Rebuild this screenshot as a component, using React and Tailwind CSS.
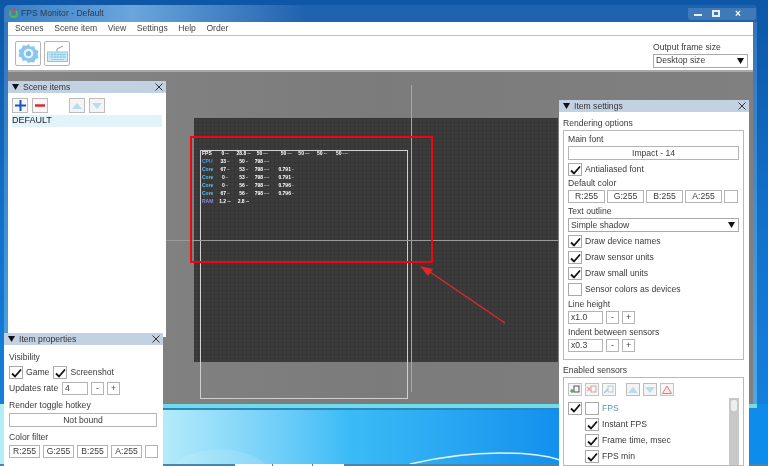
import React from 'react';

const font = { fontFamily: '"Liberation Sans", Arial, sans-serif' };

const Check = ({ checked = true, className = '' }) => (
  <span className={`flex h-[13px] w-[14px] shrink-0 items-center justify-center border border-[#a9a9a9] bg-white ${className}`}>
    {checked && (
      <svg width="11" height="10" viewBox="0 0 11 10">
        <path d="M1 5.5 L4 8.5 L10 1.5" fill="none" stroke="#111" strokeWidth="1.8" />
      </svg>
    )}
  </span>
);

const CheckRow = ({ label, checked = true, className = '' }) => (
  <div className={`flex h-[13px] items-center gap-[3px] ${className}`}>
    <Check checked={checked} />
    <span>{label}</span>
  </div>
);

const Btn = ({ children, className = '' }) => (
  <div className={`flex h-[13px] items-center justify-center border border-[#b4b4b4] bg-white ${className}`}>{children}</div>
);

const Label = ({ children, className = '' }) => (
  <div className={`flex h-[14px] items-center ${className}`}>{children}</div>
);

const Arrow = () => (
  <svg width="7" height="6" viewBox="0 0 7 6" className="shrink-0">
    <path d="M0 0 H7 L3.5 6 Z" fill="#111" />
  </svg>
);

const Select = ({ value, className = '' }) => (
  <div className={`flex h-[14px] items-center justify-between border border-[#a9a9a9] bg-white pl-[2px] pr-[3px] ${className}`}>
    <span>{value}</span>
    <Arrow />
  </div>
);

const Close = () => (
  <svg width="8" height="8" viewBox="0 0 8 8">
    <path d="M0.5 0.5 L7.5 7.5 M7.500 0.5 L0.5 7.5" stroke="#333" strokeWidth="1" />
  </svg>
);

const PanelHeader = ({ title }) => (
  <div className="flex h-[12px] items-center justify-between bg-[#c3d2e3] pl-[4px] pr-[3px]">
    <div className="flex items-center gap-[4px]">
      <Arrow />
      <span className="text-[#333]">{title}</span>
    </div>
    <Close />
  </div>
);

const ColorRow = ({ widths, swatch, gap = 'gap-[3px]' }) => (
  <div className={`flex ${gap}`}>
    {['R:255', 'G:255', 'B:255', 'A:255'].map((c) => (
      <Btn key={c} className={widths}>{c}</Btn>
    ))}
    <Btn className={swatch} />
  </div>
);

const Stepper = ({ value, inputClass }) => (
  <div className="flex gap-[3px]">
    <Btn className={`justify-start pl-[2px] ${inputClass}`}>{value}</Btn>
    <Btn className="w-[13px]">-</Btn>
    <Btn className="w-[13px]">+</Btn>
  </div>
);

const ToolIcon = ({ children, className = '' }) => (
  <div className={`flex h-[13px] w-[14px] items-center justify-center border border-[#c4c4c4] bg-[#f6f6f6] ${className}`}>
    {children}
  </div>
);

const Tri = ({ up, color = '#b9dbee', size = 'w-[15px] h-[15px]' }) => (
  <div className={`flex items-center justify-center border border-[#bcbcbc] bg-[#f4f4f4] ${size}`}>
    <svg width="10" height="6" viewBox="0 0 10 6">
      <path d={up ? 'M0 6 L5 0 L10 6 Z' : 'M0 0 H10 L5 6 Z'} fill={color} />
    </svg>
  </div>
);

// column widths for the overlay text, after the 14px name column
const statCols = ['w-[18px]', 'w-[19px]', 'w-[18px]', 'w-[30px]', 'w-[6px]', 'w-[30px]', 'w-[10px]'];

const statRows = [
  { name: 'FPS', color: 'text-white', cells: ['0', '28.8', '50', '50', '50', '50', '50'], units: ['fps', 'ms', 'min', 'avg', 'max', '1%', '0.1%'] },
  { name: 'CPU', color: 'text-[#4f9be8]', cells: ['33', '50', '798'], units: ['%', 'C', 'MHz'] },
  { name: 'Core', color: 'text-[#5cc0f0]', cells: ['67', '53', '798', '0.791'], units: ['%', 'C', 'MHz', 'V'] },
  { name: 'Core', color: 'text-[#5cc0f0]', cells: ['0', '53', '798', '0.791'], units: ['%', 'C', 'MHz', 'V'] },
  { name: 'Core', color: 'text-[#5cc0f0]', cells: ['0', '56', '798', '0.796'], units: ['%', 'C', 'MHz', 'V'] },
  { name: 'Core', color: 'text-[#5cc0f0]', cells: ['67', '56', '798', '0.796'], units: ['%', 'C', 'MHz', 'V'] },
  { name: 'RAM', color: 'text-[#8f87dc]', cells: ['1.2', '2.8'], units: ['GB', 'GB'] },
];

const SceneItems = () => (
  <div className="absolute left-[8px] top-[81px] h-[256px] w-[158px] bg-white">
    <PanelHeader title="Scene items" />
    <div className="flex items-center px-[4px] pt-[5px]">
      <div className="flex h-[15px] w-[16px] items-center justify-center border border-[#bcbcbc] bg-[#f6f6f6]">
        <svg width="11" height="11" viewBox="0 0 11 11"><path d="M5.5 0 V11 M0 5.5 H11" stroke="#1558c0" strokeWidth="2" /></svg>
      </div>
      <div className="ml-[4px] flex h-[15px] w-[16px] items-center justify-center border border-[#bcbcbc] bg-[#f6f6f6]">
        <svg width="10" height="3" viewBox="0 0 10 3"><path d="M0 1.5 H10" stroke="#e0202c" strokeWidth="2.4" /></svg>
      </div>
      <Tri up size="ml-[21px] w-[16px] h-[15px]" />
      <Tri size="ml-[4px] w-[16px] h-[15px]" />
    </div>
    <div className="mx-[4px] mt-[2px] flex h-[12px] items-center bg-[#e3f3fc] text-[9px] text-[#222]">DEFAULT</div>
  </div>
);

const ItemProperties = () => (
  <div className="absolute left-[4px] top-[333px] h-[133px] w-[159px] bg-white">
    <PanelHeader title="Item properties" />
    <div className="px-[5px] pt-[5px]">
      <Label>Visibility</Label>
      <div className="mt-[2px] flex">
        <CheckRow label="Game" />
        <CheckRow label="Screenshot" className="ml-[4px]" />
      </div>
      <div className="mt-[3px] flex items-center whitespace-nowrap">
        <span className="w-[53px]">Updates rate</span>
        <Stepper value="4" inputClass="w-[26px]" />
      </div>
      <Label className="mt-[3px]">Render toggle hotkey</Label>
      <Btn className="mt-[1px] h-[14px] w-[148px]">Not bound</Btn>
      <Label className="mt-[3px]">Color filter</Label>
      <div className="mt-[1px]">
        <ColorRow widths="w-[31px]" swatch="w-[13px]" />
      </div>
    </div>
  </div>
);

const ItemSettings = () => (
  <div className="absolute left-[559px] top-[100px] h-[366px] w-[190px] bg-white">
    <PanelHeader title="Item settings" />
    <div className="px-[4px] pt-[4px]">
      <Label>Rendering options</Label>
      <div className="h-[230px] w-[181px] border border-[#b9b9b9] px-[4px] pt-[1px]">
        <Label>Main font</Label>
        <Btn className="h-[14px] w-[171px]">Impact - 14</Btn>
        <CheckRow label="Antialiased font" className="mt-[3px]" />
        <Label>Default color</Label>
        <ColorRow widths="w-[37px]" swatch="w-[14px]" gap="gap-[2px]" />
        <Label className="mt-[1px]">Text outline</Label>
        <Select value="Simple shadow" className="w-[171px]" />
        <CheckRow label="Draw device names" className="mt-[3px]" />
        <CheckRow label="Draw sensor units" className="mt-[3px]" />
        <CheckRow label="Draw small units" className="mt-[3px]" />
        <CheckRow label="Sensor colors as devices" checked={false} className="mt-[3px]" />
        <Label className="mt-[1px]">Line height</Label>
        <Stepper value="x1.0" inputClass="w-[35px]" />
        <Label className="mt-[1px]">Indent between sensors</Label>
        <Stepper value="x0.3" inputClass="w-[35px]" />
      </div>
      <Label className="h-[17px] pt-[3px]">Enabled sensors</Label>
      <div className="relative h-[89px] w-[181px] overflow-hidden border border-[#b9b9b9] px-[4px] pt-[5px]">
        <div className="flex items-center">
          <ToolIcon><svg width="10" height="9" viewBox="0 0 10 9"><rect x="4" y="1" width="5" height="6" fill="none" stroke="#555" /><path d="M0 6 H4 M2 4 V8" stroke="#25a23a" strokeWidth="1.2" /></svg></ToolIcon>
          <ToolIcon className="ml-[3px]"><svg width="10" height="9" viewBox="0 0 10 9"><rect x="4" y="1" width="5" height="6" fill="none" stroke="#c9a9a9" /><path d="M0 2 L4 6 M4 2 L0 6" stroke="#eba3a3" strokeWidth="1.2" /></svg></ToolIcon>
          <ToolIcon className="ml-[3px]"><svg width="10" height="9" viewBox="0 0 10 9"><rect x="4" y="1" width="5" height="6" fill="none" stroke="#b9c9d4" /><path d="M0 8 L4 4" stroke="#9cc6e0" strokeWidth="1.4" /></svg></ToolIcon>
          <Tri up size="ml-[10px] w-[14px] h-[13px]" />
          <Tri size="ml-[3px] w-[14px] h-[13px]" />
          <ToolIcon className="ml-[3px]"><svg width="10" height="9" viewBox="0 0 10 9"><path d="M5 1 L9.500 8.500 H0.500 Z" fill="#fbeaea" stroke="#e77" /></svg></ToolIcon>
        </div>
        <div className="mt-[5px] flex h-[14px] items-center">
          <Check />
          <Check checked={false} className="ml-[3px]" />
          <span className="ml-[3px] text-[#5b93bf]">FPS</span>
        </div>
        <div className="pl-[17px]">
          <CheckRow label="Instant FPS" className="mt-[3px]" />
          <CheckRow label="Frame time, msec" className="mt-[3px]" />
          <CheckRow label="FPS min" className="mt-[3px]" />
        </div>
        <div className="absolute right-[4px] top-[20px] h-[70px] w-[10px] bg-[#c8c8c8] px-[2px] pt-[2px]">
          <div className="h-[11px] rounded-[2px] bg-[#eeeeee]" />
        </div>
      </div>
    </div>
  </div>
);

const Viewport = () => (
  <div className="relative h-[332px] bg-gradient-to-r from-[#858585] via-[#7b7b7b] to-[#808080] pl-[186px] pt-[46px]">
    <div className="h-[244px] w-[364px] bg-[#3c3c3c] bg-[linear-gradient(#363636_1px,transparent_1px),linear-gradient(90deg,#363636_1px,transparent_1px)] bg-[size:4px_4px]" />
    {/* frame overlay */}
    <div className="absolute left-[192px] top-[78px] h-[249px] w-[208px] border border-[#cfcfcf] pl-[1px] text-[5px] font-bold leading-[8px] text-white">
      <div className="mt-[-2px]">
        {statRows.map((row, i) => (
          <div key={i} className="flex h-[8px] items-center whitespace-nowrap">
            <span className={`w-[14px] ${row.color}`}>{row.name}</span>
            {row.cells.map((c, j) => (
              <span key={j} className={`relative flex justify-center ${statCols[j]}`}>
                {c}
                <span className="ml-[1px] self-end text-[2.500px] font-normal leading-[6px]">{row.units[j]}</span>
              </span>
            ))}
          </div>
        ))}
      </div>
    </div>
    {/* guides */}
    <div className="absolute left-[403px] top-[13px] h-[307px] w-px bg-[#a5a5a5]" />
    <div className="absolute left-[158px] top-[168px] h-px w-[392px] bg-[#9a9a9a]" />
    {/* annotation */}
    <div className="absolute left-[182px] top-[64px] h-[127px] w-[243px] border-2 border-[#f2050f]" />
    <svg className="absolute left-[400px] top-[185px]" width="110" height="75" viewBox="0 0 110 75">
      <path d="M97 66 L22 15" stroke="#e8242c" strokeWidth="1.4" fill="none" />
      <path d="M12 9 L25 12 L20 19 Z" fill="#e8242c" />
    </svg>
  </div>
);

const GearIcon = () => (
  <svg width="21" height="21" viewBox="0 0 24 24">
    <path
      d="M12 1l2.5 3.200 4-.6 1.400 3.800 3.600 1.800-1.200 3.800 1.200 3.800-3.600 1.800-1.400 3.800-4-.6L12 23l-2.500-2.900-4 .6-1.400-3.800L.5 15l1.200-3.800L.5 8.200l3.600-1.800 1.400-3.800 4 .6z"
      fill="#8cc6ee"
    />
    <circle cx="12" cy="12" r="5.500" fill="#e8f4fb" />
    <circle cx="12" cy="12" r="3" fill="#7fbce6" />
  </svg>
);

const KeyboardIcon = () => (
  <svg width="21" height="17" viewBox="0 0 21 17">
    <path d="M10 7 V4 L16 1" fill="none" stroke="#8a9aa4" strokeWidth="1" />
    <rect x="0.500" y="7" width="20" height="9.500" fill="#cfeaf7" stroke="#8cc6e4" />
    <path d="M2 9.500 H19 M2 12 H19 M4 14.500 H17 M5 8 V13 M8 8 V13 M11 8 V13 M14 8 V13 M17 8 V13" stroke="#8cc6e4" strokeWidth="0.800" />
  </svg>
);

const App = () => (
  <div
    style={font}
    className="relative h-[466px] w-[768px] overflow-hidden bg-gradient-to-b from-[#0d57a6] via-[#1272cc] to-[#1584e2] text-[8.600px] text-[#3a3a3a] blur-[0.35px]"
  >
    {/* desktop wallpaper under the window */}
    <div className="absolute inset-x-0 bottom-0 top-[404px] bg-gradient-to-r from-[#b4ecfa] from-[21%] via-[#3cbcf6] via-[45%] to-[#0e8cec] to-[75%]" />
    <svg className="absolute left-[400px] top-[450px]" width="160" height="16" viewBox="0 0 160 16">
      <path d="M10 14 C40 7 70 3 100 3 C125 3 145 5 160 10" fill="none" stroke="#dff6fc" strokeWidth="1.600" />
    </svg>
    <svg className="absolute left-[172px] top-[445px]" width="96" height="21" viewBox="0 0 96 21">
      <path d="M0 21 C16 2 70 -4 96 21 Z" fill="#ffffff" opacity="0.12" />
    </svg>
    {/* taskbar edge */}
    <div className="absolute bottom-0 left-0 flex h-[2px] w-full bg-[#4b84a8] pl-[235px]">
      <span className="h-[2px] w-[37px] bg-white" />
      <span className="ml-px h-[2px] w-[39px] bg-white" />
      <span className="ml-px h-[2px] w-[31px] bg-white" />
    </div>

    {/* window */}
    <div className="relative ml-[4px] mt-[5px] w-[753px] rounded-t-[5px] bg-gradient-to-b from-[#3573ba] to-[#4fa8e4] px-[4px]">
      <div className="mx-[-4px] flex h-[17px] items-center justify-between rounded-t-[5px] bg-gradient-to-r from-[#3a7fc4] via-[#6aa5dc] via-[17%] to-[#1f62ae] to-[40%] px-[4px]">
        <div className="flex items-center gap-[3px] pl-[1px]">
          <span className="h-[9px] w-[9px] rounded-full border-2 border-[#56b848] border-t-[#e0483c]" />
          <span className="text-[#2a3a4e]">FPS Monitor - Default</span>
        </div>
        <div className="mr-[-3px] flex h-[12px] w-[68px] items-center rounded-b-[3px] bg-[#4079b8] pl-[6px]">
          <span className="mt-[3px] h-[2px] w-[8px] bg-[#e8eef6]" />
          <span className="ml-[10px] h-[7px] w-[8px] border-2 border-[#e8eef6]" />
          <span className="ml-[15px] text-[10px] font-bold leading-none text-white">×</span>
        </div>
      </div>
      <div className="flex h-[14px] items-center gap-[10.500px] border-b border-[#c0c0c0] bg-white pl-[7px] text-[#444]">
        {['Scenes', 'Scene item', 'View', 'Settings', 'Help', 'Order'].map((m) => (
          <span key={m}>{m}</span>
        ))}
      </div>
      <div className="flex h-[36px] items-center justify-between border-b-2 border-[#a9a9a9] bg-white pl-[7px] pr-[5px]">
        <div className="flex gap-[3px]">
          <div className="flex h-[25px] w-[26px] items-center justify-center rounded-[2px] border border-[#b5b5b5]"><GearIcon /></div>
          <div className="flex h-[25px] w-[26px] items-center justify-center rounded-[2px] border border-[#b5b5b5]"><KeyboardIcon /></div>
        </div>
        <div className="mt-[2px] w-[95px]">
          <div className="h-[13px] leading-[13px]">Output frame size</div>
          <Select value="Desktop size" />
        </div>
      </div>
      <Viewport />
      <div className="mx-[-4px] h-[6px] border-b-2 border-[#2f86bd] bg-[#6fdcec]" />
    </div>

    <SceneItems />
    <ItemProperties />
    <ItemSettings />
  </div>
);

export default App;
